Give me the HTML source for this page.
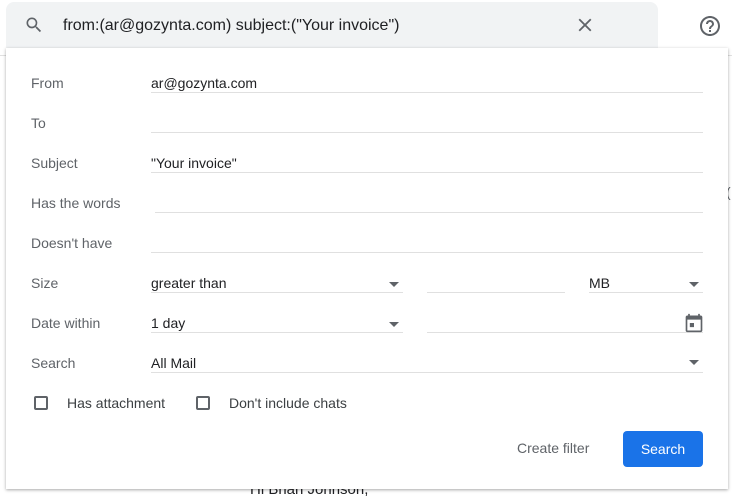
<!DOCTYPE html>
<html><head><style>
*{margin:0;padding:0;box-sizing:border-box}
body{width:732px;height:494px;overflow:hidden;background:#fff;font-family:"Liberation Sans",Arial,sans-serif;position:relative}
.bar{position:absolute;left:6px;top:2px;width:652px;height:46px;background:#f1f3f4;border-radius:8px 8px 0 0}
.q{position:absolute;left:63px;top:17px;font-size:16px;color:#202124}
.hr{position:absolute;left:0;top:55px;width:732px;height:1px;background:#e0e0e0}
.panel{position:absolute;left:6px;top:48px;width:722px;height:441px;background:#fff;box-shadow:0 1px 3px rgba(0,0,0,.35);}
.lab{position:absolute;left:31px;font-size:14px;color:#5f6368}
.val{position:absolute;font-size:14px;color:#202124}
.ln{position:absolute;height:1px;background:#e0e0e0}
.arr{position:absolute;width:0;height:0;border-left:5px solid transparent;border-right:5px solid transparent;border-top:5px solid #5f6368}
.cb{position:absolute;width:14px;height:14px;border:2px solid #5f6368;border-radius:2px;top:396px}
</style></head><body>
<div class="hr"></div>
<div style="position:absolute;left:250px;top:481px;font-size:15px;color:#202124">Hi Brian Johnson,</div>
<div style="position:absolute;left:726px;top:184px;font-size:14px;color:#5f6368">(</div>
<div class="bar"></div>
<svg style="position:absolute;left:24px;top:15px" width="20" height="20" viewBox="0 0 24 24"><path fill="#5f6368" d="M15.5 14h-.79l-.28-.27A6.47 6.47 0 0 0 16 9.5 6.5 6.5 0 1 0 9.5 16c1.610 0 3.09-.59 4.23-1.57l.27.28v.79l5 4.99L20.490 19l-4.99-5zm-6 0C7.01 14 5 11.99 5 9.5S7.01 5 9.5 5 14 7.01 14 9.5 11.99 14 9.5 14z"/></svg>
<div class="q">from:(ar@gozynta.com) subject:("Your invoice")</div>
<svg style="position:absolute;left:574px;top:14px" width="22" height="22" viewBox="0 0 24 24"><path fill="#5f6368" d="M19 6.41 17.59 5 12 10.59 6.41 5 5 6.41 10.59 12 5 17.59 6.41 19 12 13.41 17.59 19 19 17.59 13.41 12z"/></svg>
<svg style="position:absolute;left:698px;top:14px" width="24" height="24" viewBox="0 0 24 24"><path fill="#5f6368" d="M11 18h2v-2h-2v2zm1-16C6.48 2 2 6.48 2 12s4.48 10 10 10 10-4.48 10-10S17.52 2 12 2zm0 18c-4.41 0-8-3.59-8-8s3.59-8 8-8 8 3.59 8 8-3.59 8-8 8zm0-14c-2.21 0-4 1.79-4 4h2c0-1.1.9-2 2-2s2 .9 2 2c0 2-3 1.75-3 5h2c0-2.25 3-2.5 3-5 0-2.21-1.79-4-4-4z"/></svg>
<div class="panel"></div>

<div class="lab" style="top:75px">From</div><div class="val" style="left:151px;top:75px">ar@gozynta.com</div><div class="ln" style="left:151px;top:92px;width:552px"></div>
<div class="lab" style="top:115px">To</div><div class="ln" style="left:151px;top:132px;width:552px"></div>
<div class="lab" style="top:155px">Subject</div><div class="val" style="left:151px;top:155px">"Your invoice"</div><div class="ln" style="left:151px;top:172px;width:552px"></div>
<div class="lab" style="top:195px">Has the words</div><div class="ln" style="left:155px;top:212px;width:548px"></div>
<div class="lab" style="top:235px">Doesn't have</div><div class="ln" style="left:151px;top:252px;width:552px"></div>
<div class="lab" style="top:275px">Size</div><div class="val" style="left:151px;top:275px">greater than</div><div class="arr" style="left:389px;top:282px"></div><div class="ln" style="left:151px;top:292px;width:252px"></div>
<div class="ln" style="left:427px;top:292px;width:138px"></div>
<div class="val" style="left:589px;top:275px">MB</div><div class="arr" style="left:689px;top:282px"></div><div class="ln" style="left:589px;top:292px;width:114px"></div>
<div class="lab" style="top:315px">Date within</div><div class="val" style="left:151px;top:315px">1 day</div><div class="arr" style="left:389px;top:322px"></div><div class="ln" style="left:151px;top:332px;width:252px"></div>
<div class="ln" style="left:427px;top:332px;width:276px"></div>
<svg style="position:absolute;left:684px;top:313px" width="20" height="20" viewBox="0 0 24 24"><path fill="#5f6368" d="M20 3h-1V1h-2v2H7V1H5v2H4c-1.1 0-2 .9-2 2v16c0 1.1.9 2 2 2h16c1.1 0 2-.9 2-2V5c0-1.1-.9-2-2-2zm0 18H4V8h16v13zM7 12h5v5H7z"/></svg>
<div class="lab" style="top:355px">Search</div><div class="val" style="left:151px;top:355px">All Mail</div><div class="arr" style="left:689px;top:360px"></div><div class="ln" style="left:151px;top:372px;width:552px"></div>
<div class="cb" style="left:34px"></div><div class="val" style="left:67px;top:395px;color:#3c4043">Has attachment</div>
<div class="cb" style="left:196px"></div><div class="val" style="left:229px;top:395px;color:#3c4043">Don't include chats</div>
<div class="val" style="left:517px;top:440px;color:#5f6368">Create filter</div>
<div style="position:absolute;left:623px;top:431px;width:80px;height:36px;background:#1a73e8;border-radius:4px;color:#fff;font-size:14px;text-align:center;line-height:36px">Search</div>
</body></html>
